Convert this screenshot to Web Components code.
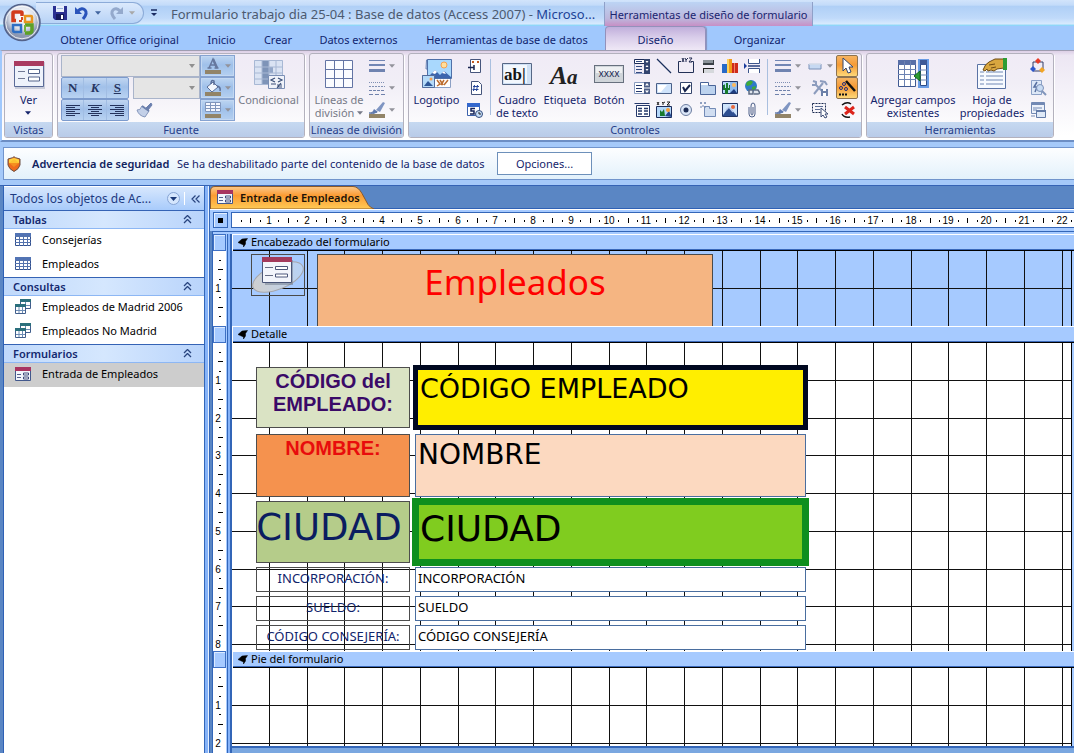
<!DOCTYPE html>
<html lang="es">
<head>
<meta charset="utf-8">
<title>Formulario trabajo dia 25-04 : Base de datos (Access 2007)</title>
<style>
html, body { margin: 0; height: 100%; }
body { font: 11px/13px "Noto Sans", "Open Sans", sans-serif; color: #15246b; background: #5a86c4; overflow: hidden; }
</style>
</head>
<body>
<access-app></access-app>
<script>
const arrow = '<svg class="arr" width="7" height="4" viewBox="0 0 7 4"><path d="M0 0h7L3.500 4z" fill="currentColor"/></svg>';

/* Icon drawings: name -> [width, height, markup] */
const lines3 = '<path d="M0 2.500h16" stroke="#7286b4" stroke-width="1"/><path d="M0 7h16" stroke="#7286b4" stroke-width="2"/><path d="M0 12.500h16" stroke="#6f83b0" stroke-width="3"/>';
const dashes = '<path d="M0 2.500h16" stroke="#8090b4" stroke-dasharray="1 1"/><path d="M0 6.500h16" stroke="#8090b4" stroke-dasharray="2 1"/><path d="M0 10.500h16" stroke="#7082ac" stroke-dasharray="3 1"/><path d="M0 14.500h16" stroke="#7082ac" stroke-dasharray="4 2"/>';
const brushLine = '<path d="M4 10Q1 11 0 11 4 13 8 10z" fill="#9fb3d8" stroke="#6c80ac"/><path d="M7 8l7-8 2 1-5 9z" fill="#7f95c2"/><path d="M5 7l4 3-3 1H3z" fill="#5f7ab0"/><path d="M0 12h16v4H0z" fill="#928468"/>';
const win = '<path d="M.5.5h15v13H.5z" fill="#f2f5fc" stroke="#42588c"/><path d="M0 0h16v4H0z" fill="#a83460"/><path d="M2 7.500h4M2 10.500h4" stroke="#555f8c"/><path d="M8.500 6h5v2h-5zM8.500 10h5v2h-5z" fill="#fff" stroke="#3e4a7c"/>';
const bigwin = '<path d="M2 4h30v27H2z" fill="#8d98b0" opacity=".4"/><path d="M1.500 3.500h29v25h-29z" fill="#eef2fb" stroke="#5a6a98"/><path d="M1 3h30v5H1z" fill="#a93a60"/><path d="M5 13.500h7M5 20.500h7" stroke="#707894"/><path d="M15.500 11.500h11v4h-11zM15.500 19h11v4h-11z" fill="#fff" stroke="#54648c"/>';
const I = {
 office: [38,38,'<defs><radialGradient id="g" cx=".5" cy=".35"><stop offset="0" stop-color="#fff"/><stop offset=".65" stop-color="#dfe3ec"/><stop offset="1" stop-color="#8d98b2"/></radialGradient></defs><circle cx="18" cy="18.500" r="18" fill="url(#g)" stroke="#53628a" stroke-width="1.500"/><circle cx="18" cy="18.500" r="16.300" fill="none" stroke="#fff" opacity=".8"/><path d="M9 9q0-1 1-1h7q1 0 1 1v3M9 9v7.500h3" fill="none" stroke="#d23b1c" stroke-width="3.500"/><path d="M18 13v4h-4" fill="none" stroke="#d84a20" stroke-width="2" stroke-dasharray="3 1"/><path d="M21 12h6q1 0 1 1v5h-7z" fill="none" stroke="#e8941e" stroke-width="2.500"/><path d="M9 21h8v7h-6q-2 0-2-2z" fill="none" stroke="#2f6fc4" stroke-width="2.500"/><path d="M21 21h7v5q0 3-3 3h-4" fill="none" stroke="#5da026" stroke-width="3.500"/><path d="M21 21v7" stroke="#74b43c" stroke-width="2"/>'],
 save: [14,14,'<path d="M0 0h14v14H2l-2-2z" fill="#2a2f91"/><path d="M3 0h8v6H3z" fill="#e8eefb"/><path d="M4 2h6v1H4z" fill="#9bb2d8"/><path d="M3 8h8v6H3z" fill="#15195c"/><path d="M8 9h2v4H8z" fill="#fff"/>'],
 undo: [14,14,'<path d="M3 5q4-4 7-1t-2 9" fill="none" stroke="#2a54bb" stroke-width="3"/><path d="M0 1v7h7z" fill="#2a54bb"/>'],
 redo: [14,14,'<path d="M11 5Q7 1 4 4t2 9" fill="none" stroke="#94a9cc" stroke-width="3"/><path d="M14 1v7H7z" fill="#94a9cc"/>'],
 more: [8,8,'<path d="M1 1h6" stroke="#1a2b62" stroke-width="1.500"/><path d="M1 4h6L4 7z" fill="#1a2b62"/>'],
 ver: [32,32,bigwin],
 cond: [32,32,'<path d="M1 2h29v25H1z" fill="#dae3f3"/><path d="M9 2h7v25H9z" fill="#7e94b8"/><path d="M16 9h4v6h-4z" fill="#93a7c8"/><path d="M1.500 2.500h28v24h-28zM9 2v25M16 2v25M23 2v25M1 9h29M1 15h29M1 21h29" fill="none" stroke="#a8b8d4"/><path d="M15.500 17.500h16v13h-16z" fill="#f0f3fa" stroke="#7b8fb5"/><path d="M22 20l-4 2 4 2m-4 2h5M25 20l4 2-4 2M24 27h5M24 29h5M28 25l-4 5" fill="none" stroke="#3a4f78" stroke-width="1.200"/>'],
 gridbig: [32,32,'<path d="M2.500 2.500h27v27h-27z" fill="#fbfcff"/><path d="M2.500 2.500h27v27h-27zM11.500 2v28M20.500 2v28M2 11.500h28M2 20.500h28" fill="none" stroke="#6374a4"/>'],
 lines: [16,16,lines3], dashes: [16,16,dashes], brushline: [16,16,brushLine],
 fontcolor: [16,16,'<path d="M4 10L8 1l4 9M5.500 7h5M2.500 10h4M9.500 10h4" fill="none" stroke="#66789e" stroke-width="1.500"/><path d="M8 1l4 9" stroke="#66789e" stroke-width="2.500"/><path d="M0 12h16v4H0z" fill="#928468"/>'],
 fill: [16,16,'<path d="M2 7l6-5 5 5-6 5z" fill="#f4f7fd" stroke="#5a6e98"/><path d="M6 4q0-5 3-3v4M12 6q4 1 3 5" fill="none" stroke="#5a6e98" stroke-width="1.500"/><path d="M0 12h16v4H0z" fill="#928468"/>'],
 gridsm: [16,16,'<path d="M.5.5h15v9H.5zM5.500 0v10M10.500 0v10M0 3.500h16M0 6.500h16" fill="#f5f8ff" stroke="#8096bc"/><path d="M0 12h16v4H0z" fill="#928468"/>'],
 al: [16,14,'<path d="M1 2.500h14M1 4.500h9M1 6.500h14M1 8.500h9M1 10.500h14M1 12.500h9" stroke="#24335c"/>'],
 ac: [16,14,'<path d="M1 2.500h14M4 4.500h8M1 6.500h14M4 8.500h8M1 10.500h14M4 12.500h8" stroke="#24335c"/>'],
 ar: [16,14,'<path d="M1 2.500h14M6 4.500h9M1 6.500h14M6 8.500h9M1 10.500h14M6 12.500h9" stroke="#24335c"/>'],
 brush: [16,16,'<path d="M10 6l5-5 1 2-4 5z" fill="#6a7fae" stroke="#6a7fae"/><path d="M6 4l7 5-4 6q-6-1-8-7 3 1 5-4z" fill="#c3d0e8" stroke="#8496bb"/><path d="M6 4l7 5" stroke="#6c80ac" stroke-width="2"/>'],
 logo: [32,32,'<path d="M5.500 2h20l1 9H5z" fill="#bdd6f5" stroke="#6c86b4"/><path d="M1.500 17.500h28v12h-28z" fill="#fff" stroke="#8ca0c4"/><path d="M6.500 1.500h24v19h-24z" fill="#a9d8fd" stroke="#4f70a8"/><circle cx="23" cy="7" r="3" fill="#ffdf9c" stroke="#f5a14e"/><path d="M7 19l7-7 5 5 4-4 7 6v1H7z" fill="#3c66ae"/><path d="M14 12l-3 3 3 1 2-2zM23 13l-2 2 4 1z" fill="#fff"/><path d="M1.500 17.500h12v12h-12z" fill="#b5daf8" stroke="#536c9c"/><path d="M3 28l4-5 5 5z" fill="#2e5697"/><circle cx="10" cy="21" r="1.500" fill="#f5a14e"/><path d="M16 22l3 4-3 2M19 22l3 5M23 22l-3 5M27 22l-4 5" fill="none" stroke="#be6e2f" stroke-width="1.500"/>'],
 page1: [16,16,'<path d="M3.500 1.500h10v13h-10z" fill="#fff" stroke="#46557c"/><path d="M5 3l2 2m0-2L5 5m5-2l2 2m0-2l-2 2" stroke="#c45b22"/><path d="M1 9.500h6M7 7v5" stroke="#1a2550" stroke-width="1.500"/>'],
 page2: [16,16,'<path d="M4.500 1.500h7l3 3v10h-10z" fill="#fff" stroke="#46557c"/><path d="M7.500 5l-1 6M10.500 5l-1 6M6 6.500h6M5.500 9.500h6" stroke="#26469c"/>'],
 date: [16,16,'<path d="M.5 1.500h12v12H.5z" fill="#fff" stroke="#3c62ac"/><path d="M0 1h13v4H0z" fill="#3468cd"/><path d="M8 6.500H4V9h3v3H3" fill="none" stroke="#15235a" stroke-width="1.500"/><circle cx="12" cy="12" r="3.500" fill="#c7def8" stroke="#344c7c"/><path d="M12 10v2h2" stroke="#222" fill="none"/>'],
 textbox: [32,32,'<path d="M1.500 5.500h29v21h-29z" fill="#cfe0f4" stroke="#566785"/><path d="M3 7h23v18H3z" fill="#f2f7fd"/><text x="3" y="22" font-family="Liberation Serif" font-weight="700" font-size="17" fill="#151515">ab|</text>'],
 etiqueta: [32,32,'<text x="1" y="26" font-family="Liberation Serif" font-style="italic" font-weight="700" font-size="26" fill="#222">A</text><text x="18" y="26" font-family="Liberation Serif" font-style="italic" font-weight="700" font-size="21" fill="#222">a</text>'],
 boton: [32,32,'<rect x="1.500" y="7.500" width="29" height="17" fill="#d0d5da" stroke="#67707e"/><path d="M3 9h26v6H3z" fill="#eef0f2"/><text x="16" y="19" text-anchor="middle" font-family="Noto Sans" font-size="10" fill="#1d2b55">xxxx</text>'],
 combo: [16,16,'<path d="M.5 1.500h15v4H.5z" fill="#fff" stroke="#1c2c58"/><path d="M10 1h6v15h-6z" fill="#33456f"/><path d="M11.500 3h3L13 5zM11.500 11h3L13 13zM11.500 9h3L13 7z" fill="#fff"/><path d="M2 3.500h6M2 8.500h6M2 11.500h6M2 14.500h6" stroke="#334a80"/><path d="M.5 6v9.500H10" fill="none" stroke="#8fa0c4"/>'],
 list: [16,16,'<path d="M.5 2.500h15v11H.5z" fill="#fff" stroke="#8a9cc0"/><path d="M10 2h6v12h-6z" fill="#4b5d86"/><path d="M11 10.500h4L13 13zM11 5.500h4L13 3z" fill="#fff"/><path d="M10 8h6" stroke="#fff"/><path d="M2 5.500h6M2 8.500h6M2 11.500h6" stroke="#24386c"/>'],
 sub: [16,16,'<path d="M.5 1.500h15M2.500 3.500h13v11h-13z" fill="#fff" stroke="#25386a"/><path d="M4 6.500h4M4 9h4M4 12h4M10 6.500h4M10 9h4M10 12h4" stroke="#25386a" stroke-width="1.500"/>'],
 line: [16,16,'<path d="M1 1l14 14" stroke="#1a2f5c" stroke-width="1.200"/>'],
 rect: [16,16,'<path d="M.5 3.500h15v10H.5z" fill="#cfe3fb" stroke="#4a6088"/><path d="M2 5h9L5 12H2z" fill="#fff"/>'],
 subimg: [16,16,'<path d="M.5 4.500h15v11H.5z" fill="#b5d8fa" stroke="#1b2c5a"/><path d="M1 0l2 3m0-3L1 3m5-3l1 1 2-1M7 1v2m4-3h3l-3 3h3" stroke="#222" fill="none"/><path d="M4 8l2 2 2-3 1 7H4z" fill="#187a2c"/><path d="M9 14l4-5 3 6z" fill="#25468a"/><circle cx="12" cy="8" r="2" fill="#f49d36"/>'],
 frame: [16,16,'<path d="M3 3.500H.5v11h15v-11H13" fill="none" stroke="#223056"/><path d="M4 0l2 4m0-4L4 4m3-4l1 2 2-2M8 2v2m3-4h3l-3 4h3" stroke="#222b50" fill="none"/>'],
 check: [16,16,'<path d="M2.500 2.500h11v11h-11z" fill="#fff" stroke="#34456c"/><path d="M5 7l2 4 5-6" fill="none" stroke="#17244d" stroke-width="2"/>'],
 radio: [16,16,'<circle cx="8" cy="8" r="5.500" fill="#dbe6f7" stroke="#6c7d9f"/><circle cx="8" cy="8" r="2.500" fill="#1d2c55"/>'],
 toggle: [16,16,'<path d="M3 2h11v5H3z" fill="#3a4046"/><path d="M3 2h10v3H3z" fill="#8b9299"/><path d="M3 10h11v5H3z" fill="#222"/><path d="M4 11h10v4H4z" fill="#d5d8dc"/>'],
 tab: [16,16,'<path d="M.5 14.500v-12h8v3h7v9z" fill="#bcd2ee" stroke="#4a6498"/><path d="M1 3h7v2H1z" fill="#fff"/>'],
 page: [16,16,'<path d="M4.500 14.500v-10h5v2h6v8z" fill="#d1def1" stroke="#738bb6"/><path d="M0 1h2m2 0h2M1 0v2m4-2v2M0 5h2m2 0h2M3 3v2" stroke="#6d82ad"/>'],
 chart: [16,16,'<path d="M0 6h5v9H0z" fill="#2869c7"/><path d="M5 1h5v14H5z" fill="#f19b1b"/><path d="M5 1h2v14H5z" fill="#fed25c"/><path d="M10 5h6v10h-6z" fill="#cf2c1b"/><path d="M12 5h1v10h-1z" fill="#f0826a"/>'],
 bound: [16,16,'<path d="M.5 1.500h15v12H.5z" fill="#b9dbfb" stroke="#223667"/><path d="M8 2h7v11H8z" fill="#8fbaec"/><path d="M3 4v4h1V3h2v5h1V5h1v5H6v4H3v-4H1V5h1z" fill="#17792b"/><circle cx="12" cy="5" r="2" fill="#ffb95b"/><path d="M8 13l4-4 3 4z" fill="#1d3c80"/>'],
 image: [16,16,'<path d="M.5 1.500h15v13H.5z" fill="#cfe4fb" stroke="#223667"/><path d="M1 13l6-8 8 9H1z" fill="#2e4f91"/><circle cx="11" cy="5" r="2" fill="#e8683c"/><path d="M4 8l3-3 4 5" fill="none" stroke="#b9c9ec" stroke-width="1.500"/>'],
 brk: [16,16,'<path d="M4.500 1v4.500h11V1M4.500 15v-4.500h11V15" fill="#fff" stroke="#3c558b"/><path d="M4 8h12" stroke="#27407c" stroke-width="1.500"/><path d="M0 5l3 3-3 3z" fill="#1a3d9c"/>'],
 link: [16,16,'<circle cx="7" cy="6" r="6" fill="#2f7ac8"/><path d="M3 2q4-3 6 0l-2 3-4 1-1-2zM8 7l4-1-1 4H8z" fill="#3eaa38"/><path d="M5 10h4v4H5zM10 10h4q3 4 0 4h-4" fill="#dfe5ee" stroke="#5d6b82" stroke-width="1.500"/>'],
 clip: [16,16,'<path d="M5 5v7q0 3 3 3t3-3V4q0-3-2-3T7 4v7q0 2 1 2t1-2V5" fill="none" stroke="#4c5f88" stroke-width="1"/>'],
 raised: [16,16,'<path d="M2 6h12v5H2z" fill="#c7d9f2" stroke="#7a90b8"/><path d="M2 6h12" stroke="#fff"/>'],
 tools: [16,16,'<path d="M3 4l8 8M11 3L2 14" stroke="#8c9cbd" stroke-width="2"/><path d="M8 1l5 1 2 3M1 1l3 1v3H0" fill="none" stroke="#8c9cbd" stroke-width="2"/><path d="M9 9h7v7H9z" fill="#6d81a9"/><path d="M11 9h3v2h-3zM11 13h3v3h-3z" fill="#fff"/>'],
 select: [16,16,'<path d="M.5 1.500h13v9H.5z" fill="none" stroke="#1b2b50" stroke-dasharray="2 1"/><path d="M3 4.500h8M3 7.500h5" stroke="#5a6c94"/><path d="M9 6v9l2-2 2 3 2-1-2-3h3z" fill="#fff" stroke="#3b4b74"/>'],
 cursor: [16,18,'<path d="M4 1v13l3-3 2 5 3-1-2-5h4z" fill="#fff" stroke="#31456e"/>'],
 wand: [18,18,'<path d="M8 2l9 10" stroke="#111" stroke-width="2.500"/><circle cx="3" cy="9" r="1.500" fill="none" stroke="#232c7a"/><circle cx="6" cy="5" r="1.500" fill="none" stroke="#232c7a"/><circle cx="8" cy="10" r="1.500" fill="none" stroke="#232c7a"/><path d="M1 15.500h8" stroke="#111" stroke-width="2" stroke-dasharray="2 1"/>'],
 nox: [18,16,'<path d="M4 3q5-4 9-1M4 12q2 4 8 3" fill="none" stroke="#111" stroke-width="1.500"/><path d="M7 5l9 7M16 5l-9 7" stroke="#dc241c" stroke-width="3"/>'],
 addf: [32,32,'<path d="M1.500 2.500h17v26h-17z" fill="#fff" stroke="#405a92"/><path d="M1 2h18v5H1z" fill="#586fa8"/><path d="M7.500 3v25M13.500 3v25M1 11.500h18M1 16.500h18M1 21.500h18" stroke="#6d83b2"/><path d="M21 1h11v29H21z" fill="#6a9ce5"/><path d="M23.500 3.500h6v24h-6z" fill="#fff" stroke="#2d4c88"/><path d="M23 2h7v5h-7z" fill="#3f5a97"/><path d="M23 12h7M23 17h7M23 22h7" stroke="#6d83b2"/><path d="M17 18l6-5v10z" fill="#2a9a31" stroke="#126418"/>'],
 props: [32,32,'<path d="M1.500 6.500h28v24h-28z" fill="#f7faff" stroke="#5a73a5"/><path d="M4 14h4m2 0h17M4 18h4m2 0h17M4 22h4m2 0h17M4 26h4m2 0h17" stroke="#7188b5"/><path d="M7 12q2-6 6-8l6-3h9v9l-7 1-3 2-3-1-3 1-1-2-2 2z" fill="#d8a63f" stroke="#6f4b14"/><path d="M13 7l6-1M15 10l5-1" stroke="#6f4b14"/><path d="M27 0h4v12h-4z" fill="#2d9d35"/>'],
 rel: [16,16,'<path d="M3 4h10v9H3z" fill="none" stroke="#333c66"/><path d="M8 0l3 3-3 3-3-3z" fill="#e83a27"/><path d="M3 8l3 3-3 3-3-3z" fill="#2e57cc"/><path d="M12 9l3 3-3 3-3-3z" fill="#f1a425"/>'],
 search: [16,16,'<path d="M1.500.5h10v14h-10z" fill="#dde8f7" stroke="#8ba0c6"/><path d="M7 2L4 7h3l-2 5" fill="none" stroke="#566fa0" stroke-width="1.500"/><circle cx="10" cy="8" r="3.500" fill="#c8dbf3" stroke="#7d92b9"/><path d="M12 11l4 4" stroke="#8195bb" stroke-width="2"/>'],
 subwin: [16,16,'<path d="M1.500.5h13v11h-13z" fill="#edf2fb" stroke="#7289b4"/><path d="M1 1h14v2H1z" fill="#7289b4"/><path d="M3 6h9M3 8h4" stroke="#7289b4"/><path d="M6.500 8.500h9v7h-9z" fill="#dfe9f7" stroke="#627ba8"/><path d="M6 8h10v2H6z" fill="#627ba8"/><path d="M1 14h4" stroke="#7289b4"/>'],
 shield: [14,16,'<path d="M7 .7l1.500 1L13 3v6q-1 4-6 6.500Q2 13 1 9V3l4.500-1.300z" fill="#ef6b1d" stroke="#6b5145"/><path d="M2 3.500L7 2l5 1.500V7H2z" fill="#ffd23d"/><path d="M2 7l5-4 5 4-5 4z" fill="#fcb126" opacity=".5"/>'],
 table: [16,13,'<path d="M.5.500h15v12H.5z" fill="#fff" stroke="#33518e"/><path d="M0 0h16v3H0z" fill="#5274b5"/><path d="M4.500 0v13M8.500 0v13M12.500 0v13M0 3.500h16M0 6.500h16M0 9.500h16" stroke="#5473ae"/>'],
 query: [16,15,'<path d="M5.500.5h10v9h-10z" fill="#fff" stroke="#415e8c"/><path d="M5 0h11v3H5z" fill="#2b6f7c"/><path d="M10.500 3v6M6 6.500h9" stroke="#6e8db5"/><path d="M.5 5.500h10v9H.5z" fill="#fff" stroke="#415e8c"/><path d="M0 5h11v3H0z" fill="#2b6f7c"/><path d="M4 8v6M7.500 8v6M1 11.500h9" stroke="#6e8db5"/>'],
 form: [16,14,win],
 dbl: [9,9,'<path d="M4.500.5L1 4M4.500.5L8 4M4.500 4.500L1 8M4.500 4.500L8 8" fill="none" stroke="#29457f" stroke-width="1.300"/>'],
 dleft: [9,8,'<path d="M4.500.5L1 4l3.500 3.500M8.500.5L5 4l3.500 3.500" fill="none" stroke="#29457f" stroke-width="1.200"/>'],
 round: [13,13,'<circle cx="6.500" cy="6.500" r="6" fill="#d5e6fd" stroke="#86a4d4"/><path d="M3 5h7L6.500 9z" fill="#1c3a78"/>'],
 sect: [10,9,'<path d="M0 4.500L4 1l5.500-.5L7.500 3.500V6L5.500 9V7z" fill="#000" stroke="#000" stroke-width=".5"/>'],
 formlogo: [54,42,'<defs><linearGradient id="e" x2="1"><stop offset="0" stop-color="#cfcfcf"/><stop offset="1" stop-color="#b7d2f5"/></linearGradient></defs><ellipse cx="26" cy="22" rx="27" ry="12" transform="rotate(-23 26 22)" fill="url(#e)" stroke="#a7a7ab"/><path d="M13 5h28v25H13z" fill="#6c7686" opacity=".5"/><path d="M10.500 3.500h29v24h-29z" fill="#f3f5fb" stroke="#4a5678"/><path d="M10 2h30v5H10z" fill="#a33a5c"/><path d="M13 12.500h8M13 20.500h8" stroke="#676d84"/><path d="M23.500 11.500h12v3h-12zM23.500 19h12v3h-12z" fill="#fff" stroke="#4d577a"/>']
};

function define(name, html, init) {
  customElements.define(name, class extends HTMLElement {
    connectedCallback() {
      if (this.shadowRoot) return;
      const root = this.attachShadow({ mode: 'open' });
      root.innerHTML = typeof html === 'function' ? html(this) : html;
      if (init) init(root, this);
    }
  });
}
const at = (el, n) => el.getAttribute(n) || '';
const reset = 'button{font:inherit;color:inherit;background:none;border:0;padding:0;margin:0;white-space:nowrap}a{color:inherit;text-decoration:none}*{box-sizing:border-box}';

define('ui-icon', el => {
  const [w, h, body] = I[at(el, 'name')];
  return `<style>:host{display:block;flex:none}svg{display:block;overflow:visible}</style><svg width="${w}" height="${h}" viewBox="0 0 ${w} ${h}" aria-hidden="true">${body}</svg>`;
});

/* ---------- title bar ---------- */
define('title-bar', `<style>${reset}
:host{display:flex;position:relative;height:26px;background:linear-gradient(#d2e4fb 0,#c3dbf9 20%,#afcff6 24%,#c0dafa 70%,#d8eafd 92%,#8fd6f8 97%)}
.qat{display:flex;align-items:center;margin:2px 0 2px 36px;width:108px;height:22px;padding-left:17px;border:1px solid #8cabd8;border-left:0;border-radius:0 11px 11px 0;background:linear-gradient(#dbe9fc,#b8d3f6);color:#41659f}
.qat button:nth-child(n+2){margin-left:8px}.qat button:nth-child(2n+3){margin-left:6px}
.arr{display:block;width:6px}
.more{width:20px}.more ui-icon{margin:auto;width:8px}
h1{margin:0;padding-left:7px;width:440px;font:13px/29px "Noto Sans",sans-serif;color:#4c5a70;white-space:nowrap;flex:none}
h1 b{font-weight:400;color:#214397}
.ctx{width:209px;margin-top:2px;text-align:center;line-height:26px;white-space:nowrap;flex:none;border:solid #8fa0c8;border-width:0 1px;background:linear-gradient(#bcd4f4,#bdb6dc 70%,#c78fc5);color:#1a2570}
.orb{position:absolute;left:4px;top:4px}
</style>
<div class="qat"><button aria-label="Guardar"><ui-icon name="save"></ui-icon></button><button aria-label="Deshacer"><ui-icon name="undo"></ui-icon></button><button aria-label="Opciones de deshacer">${arrow}</button><button aria-label="Rehacer" style="color:#9aa3b5"><ui-icon name="redo"></ui-icon></button><button aria-label="Opciones de rehacer" style="color:#a8a8a8">${arrow}</button></div>
<button class="more" aria-label="Personalizar"><ui-icon name="more"></ui-icon></button>
<h1>Formulario trabajo dia 25-04 : Base de datos (Access 2007) - <b>Microso...</b></h1>
<div class="ctx">Herramientas de diseño de formulario</div>
<button class="orb" aria-label="Botón de Office"><ui-icon name="office"></ui-icon></button>`);

/* ---------- ribbon ---------- */
define('ribbon-tabs', `<style>${reset}
:host{display:flex;height:24px;padding-left:46px;background:#a0c8fd;color:#10246e}
button{height:24px;padding-top:2px;flex:none}
.on{margin-left:2px;border:1px solid #9391bb;border-bottom:0;border-radius:4px 4px 0 0;background:linear-gradient(#c0aedb,#d9cdea 45%,#efe8f6);box-shadow:1px 0 1px #8592bc}
</style>
<button style="width:147px">Obtener Office original</button><button style="width:57px">Inicio</button><button style="width:56px">Crear</button><button style="width:105px">Datos externos</button><button style="width:192px">Herramientas de base de datos</button><button class="on" style="width:101px">Diseño</button><button style="width:107px">Organizar</button>`);

define('ribbon-group', el => `<style>
:host{display:flex;flex-direction:column;box-sizing:border-box;width:${at(el,'w')}px;height:85px;flex:none;border:1px solid #b3b1bd;border-radius:3px;background:linear-gradient(#f0ebf6,#f1eef6 35%,#fff);box-shadow:1px 1px 0 #fff}
.body{display:flex;height:68px;flex:none;padding-top:1px;box-sizing:border-box}
.cap{flex:1;line-height:15px;text-align:center;white-space:nowrap;background:linear-gradient(#c6d9f1,#b9cbe8);color:#27408b;border-radius:0 0 2px 2px}
</style><div class="body"><slot></slot></div><div class="cap">${at(el,'label')}</div>`);

define('big-button', el => `<style>${reset}
:host{display:block;flex:none;width:${at(el,'w')}px;color:${el.hasAttribute('off')?'#777a88':'#15246b'}}
button{width:100%;display:flex;flex-direction:column;align-items:center;padding-top:3px}
.t{display:block;margin:3px -8px 0;text-align:center}.arr{width:6px;vertical-align:2px}
</style><button><ui-icon name="${at(el,'icon')}"></ui-icon><span class="t">${at(el,'label').replace('|','<br>')}${el.hasAttribute('drop')?(at(el,'drop')||' ')+arrow:''}</span></button>`);

define('icon-button', el => `<style>${reset}
:host{display:block;flex:none;width:${at(el,'w')||22}px;height:22px;color:#93939b}
button{width:100%;height:22px;display:flex;align-items:center;justify-content:center;gap:4px}
.arr{width:6px}
.blue{border:1px solid #86a3d1;background:linear-gradient(#bdd5f1,#9fc0ea 45%,#b5d0f0);box-shadow:inset 0 0 0 1px #c3d8f2}
.hot{border:1px solid #8d7350;border-radius:2px;background:linear-gradient(#f6b462,#f59a35 45%,#fed879)}
</style><button class="${at(el,'kind')}" aria-label="${at(el,'label')}"><ui-icon name="${at(el,'icon')}"></ui-icon>${el.hasAttribute('drop')?arrow:''}</button>`);

define('font-panel', `<style>${reset}
:host{display:grid;grid-template-columns:139px 35px;grid-auto-rows:22px;margin-left:3px;flex:none}
.row{display:flex}
select{appearance:none;height:22px;border:1px solid #a9b4ca;border-radius:0;background:#e5e5e5 url('data:image/svg+xml,<svg xmlns="http://www.w3.org/2000/svg" width="6" height="4"><path d="M0 0h6L3 4z" fill="%23909090"/></svg>') no-repeat right 4px center;font:inherit;opacity:1}
.wide{width:139px}.short{width:67px;margin-left:4px}
.set{display:flex;width:68px;border:1px solid #7c9bcd;border-radius:2px;background:linear-gradient(#c0d6f1,#a1c0e9 45%,#b9d3f2)}
.set button{flex:1;font:700 13px/18px "Liberation Serif",serif;color:#26355f;display:flex;justify-content:center;align-items:center}
.set button+button{border-left:1px solid #a1bde3}
icon-button.b{margin-left:4px}
</style>
<div class="row"><select class="wide" aria-label="Fuente" disabled></select></div><icon-button icon="fontcolor" kind="blue" drop w="35" label="Color de fuente"></icon-button>
<div class="row"><div class="set"><button>N</button><button><i>K</i></button><button><u>S</u></button></div><select class="short" aria-label="Tamaño de fuente" disabled></select></div><icon-button icon="fill" kind="blue" drop w="35" label="Color de relleno"></icon-button>
<div class="row"><div class="set"><button aria-label="Izquierda"><ui-icon name="al"></ui-icon></button><button aria-label="Centrar"><ui-icon name="ac"></ui-icon></button><button aria-label="Derecha"><ui-icon name="ar"></ui-icon></button></div><icon-button class="b" icon="brush" label="Copiar formato"></icon-button></div><icon-button icon="gridsm" kind="blue" drop w="35" label="Cuadrícula"></icon-button>`);

define('icon-stack', el => {
  const cols = at(el,'cols') || 1, w = at(el,'w') || 22;
  return `<style>:host{display:grid;grid-template-columns:repeat(${cols},${w}px);grid-auto-rows:22px;flex:none}</style>` +
    at(el,'icons').split(' ').map(s => { const [n,f] = s.split(':'); return `<icon-button icon="${n}" label="${n}" w="${w}" ${f==='d'?'drop':''} kind="${f==='h'?'hot':''}"></icon-button>`; }).join('');
});
define('ribbon-rule', `<style>:host{display:block;width:1px;height:56px;margin:4px 4px 0;background:#a9bfdf;flex:none}</style>`);

define('ribbon-bar', `<style>
:host{display:flex;gap:4px;height:92px;box-sizing:border-box;padding:2px 0 0 2px;border-top:1px solid #9f9db1;border-bottom:2px solid #6d8ec4;background:linear-gradient(#dccfe6 0,#ece6f3 5%,#f3f0f8 40%,#fff 95%);border-left:2px solid #a0c8fd}
</style>
<ribbon-group label="Vistas" w="49"><big-button icon="ver" label="Ver" drop="<br>" w="47"></big-button></ribbon-group>
<ribbon-group label="Fuente" w="248"><font-panel></font-panel><big-button icon="cond" label="Condicional" off w="67"></big-button></ribbon-group>
<ribbon-group label="Líneas de división" w="95"><big-button icon="gridbig" label="Líneas de|división" drop off w="58"></big-button><icon-stack icons="lines:d dashes:d brushline:d" w="28"></icon-stack></ribbon-group>
<ribbon-group label="Controles" w="454"><big-button icon="logo" label="Logotipo" w="55"></big-button><icon-stack icons="page1 page2 date"></icon-stack><ribbon-rule></ribbon-rule><big-button icon="textbox" label="Cuadro|de texto" w="44"></big-button><big-button icon="etiqueta" label="Etiqueta" w="52"></big-button><big-button icon="boton" label="Botón" w="36"></big-button><icon-stack cols="6" icons="combo line frame toggle chart brk list rect check tab bound link sub subimg radio page image clip" style="margin-left:4px"></icon-stack><ribbon-rule></ribbon-rule><icon-stack icons="lines:d dashes:d brushline:d" w="32"></icon-stack><icon-stack icons="raised:d tools select" w="32"></icon-stack><icon-stack icons="cursor:h wand:h nox"></icon-stack></ribbon-group>
<ribbon-group label="Herramientas" w="188"><big-button icon="addf" label="Agregar campos|existentes" w="92"></big-button><big-button icon="props" label="Hoja de|propiedades" w="66"></big-button><icon-stack icons="rel search subwin" style="margin-left:2px"></icon-stack></ribbon-group>`);

define('security-bar', `<style>${reset}
:host{display:block;padding:5px 0 5px 3px;background:#a5c9f9}
.in{display:flex;align-items:center;height:33px;padding-left:3px;border:1px solid #7194cc;border-right:0;background:linear-gradient(#fdfeff,#e3f1fb)}
b{margin-left:11px;width:145px;white-space:nowrap;color:#10235f;font-weight:600}
button{margin-left:10px;width:95px;height:23px;border:1px solid #6d90ba;background:#fff}
span{width:310px;white-space:nowrap}
</style><div class="in"><ui-icon name="shield"></ui-icon><b>Advertencia de seguridad</b><span>Se ha deshabilitado parte del contenido de la base de datos</span><button>Opciones...</button></div>`);

/* ---------- navigation pane ---------- */
define('nav-item', el => `<style>${reset}
:host{display:block}
a{display:flex;align-items:center;height:24px;padding:0 0 3px 11px;color:#000;white-space:nowrap;${el.hasAttribute('on')?'background:#cdcdcd':''}}
span{margin-left:11px}
</style><a href="#"><ui-icon name="${at(el,'icon')}"></ui-icon><span><slot></slot></span></a>`);
define('nav-group', el => `<style>${reset}
:host{display:block;border-top:1px solid #3563b5}
button{display:flex;width:100%;height:18px;align-items:center;justify-content:space-between;padding:0 12px 0 9px;font-weight:600;color:#14296f;border-bottom:1px solid #8db7f4;background:linear-gradient(90deg,#c0d9fb,#d5e7fe 50%,#b9d4fb)}
</style><button>${at(el,'label')}<ui-icon name="dbl"></ui-icon></button><slot></slot>`);
define('nav-pane', `<style>${reset}
:host{display:block;width:201px;box-sizing:border-box;flex:none;background:#fff;border-left:1px solid #2f61b5}
.top{display:flex;align-items:center;height:24px;padding-left:6px;border-top:1px solid #fff;background:linear-gradient(#d7e7fd,#a8cbfb);color:#1d3a81;font-size:12px}
.top>span{width:157px;white-space:nowrap}
.round{border-right:1px solid #fff;padding-right:4px}
.shut{margin-left:6px}
</style><div class="top"><span>Todos los objetos de Ac...</span><button class="round" aria-label="Menú"><ui-icon name="round"></ui-icon></button><button class="shut" aria-label="Contraer"><ui-icon name="dleft"></ui-icon></button></div>
<nav-group label="Tablas"><nav-item icon="table">Consejerías</nav-item><nav-item icon="table">Empleados</nav-item></nav-group>
<nav-group label="Consultas"><nav-item icon="query">Empleados de Madrid 2006</nav-item><nav-item icon="query">Empleados No Madrid</nav-item></nav-group>
<nav-group label="Formularios"><nav-item icon="form" on>Entrada de Empleados</nav-item></nav-group>`);

/* ---------- form designer ---------- */
const CM = 37.75;
const pos = n => Math.floor(n * CM - 0.3);
define('h-ruler', '', root => {
  let s = '';
  for (let q = 1; q < 90; q++) {
    const x = pos(q / 4);
    if (q % 4 === 0) s += `<text x="${x}" y="11" text-anchor="middle">${q / 4}</text>`;
    else s += q % 2 ? `<path d="M${x} 7h1v2h-1z"/>` : `<path d="M${x} 5h1v5h-1z"/>`;
  }
  root.innerHTML = `<style>:host{display:block;height:14px;overflow:hidden;background:#fff}svg{display:block;width:100%;height:14px;font:10px "Liberation Sans",sans-serif}</style><svg>${s}</svg>`;
});
define('v-ruler', '', (root, el) => {
  const h = +at(el, 'h');
  let s = '';
  for (let q = 1; pos(q / 4) < h - 2; q++) {
    const y = pos(q / 4);
    if (q % 4 === 0) s += `<text x="5" y="${y + 4}" text-anchor="middle">${q / 4}</text>`;
    else s += q % 2 ? `<path d="M6 ${y}h2v1h-2z"/>` : `<path d="M5 ${y}h5v1H5z"/>`;
  }
  root.innerHTML = `<style>:host{display:block;overflow:hidden;background:#fff}svg{display:block;width:13px;height:${h}px;font:10px "Liberation Sans",sans-serif}</style><svg>${s}</svg>`;
});
define('form-section', el => {
  const h = +at(el, 'h'), last = el.hasAttribute('last');
  let s = '';
  for (let n = 1; n < 23; n++) s += `M${pos(n)} 0h1v${h}h-1z`;
  for (let n = 1; pos(n) < h; n++) s += `M0 ${pos(n)}h839v1H0z`;
  return `<style>${reset}
:host{display:grid;grid-template-columns:13px 6px minmax(0,1fr);grid-template-rows:17px ${h}px ${last ? '1fr' : ''};flex:${last ? '1' : 'none'}}
.mark{border:1px solid #3e70c4;background:#a6caff;box-shadow:inset 1px 1px #dcebff}
.edge{grid-row:1/span ${last ? 3 : 2};grid-column:2;border:solid #3366b8;border-width:0 2px 0 1px;background:#86b3f8;margin-left:1px}
h2{margin:0;grid-column:3;display:flex;align-items:center;padding:0 0 2px 5px;font:inherit;line-height:14px;gap:3px;color:#000;border:solid #fff;border-width:1px 0 0 1px;background:#a6caff;box-shadow:inset 0 -1px #000,inset 0 -2px #3a69bb}
v-ruler{grid-column:1;grid-row:2/span ${last ? 2 : 1}}
.body{position:relative;grid-column:3;grid-row:2;overflow:hidden;max-width:840px;border-right:1px solid #000;background:${at(el,'bg')}}
.grid{display:block;width:100%;height:${h}px}
.below{grid-column:3;grid-row:3;border-top:2px solid #3366b8;background:#7aa7e0}
</style><div class="mark"></div><div class="edge"></div><h2><ui-icon name="sect"></ui-icon>${at(el,'label')}</h2><v-ruler h="${last ? h + 5 : h}"></v-ruler><div class="body"><svg class="grid"><path d="${s}" fill="#111"/></svg><slot></slot></div>${last ? '<div class="below"></div>' : ''}`;
});
/* A bound field on the design canvas: its label and its text box. */
define('field-pair', el => `<style>${reset}
:host{position:absolute;left:24px;top:${at(el,'y')}px;height:${at(el,'h')}px;display:grid;grid-template-columns:154px 391px;gap:5px;
 color:#10246b;font:13px/17px "Noto Sans",sans-serif}
label{display:flex;justify-content:center;text-align:center;border:1px solid #4d4d4d;padding:2px 2px 0;overflow:hidden;white-space:pre;background:var(--lb,none)}
label span{flex:none}
input{width:391px;height:100%;margin:0;border:1px solid #4a6e9f;border-radius:0;background:#fff;padding:0 2px 3px;font:inherit;color:#000}
:host(.code) label{font:700 20px/23px "Liberation Sans",sans-serif;color:#3a0a67;--lb:#dae3c4}
:host(.code) input{font:27px/34px "DejaVu Sans",sans-serif;background:#ffee00;outline:5px solid #000820;outline-offset:-3px;padding:0 4px 18px}
:host(.name) label{font:700 20px/23px "Liberation Sans",sans-serif;color:#e80c0c;--lb:#f5924e}
:host(.name) input{font:28px/34px "DejaVu Sans",sans-serif;background:#fcd9c0;padding:0 2px 22px}
:host(.city) label{font:37px/44px "DejaVu Sans",sans-serif;color:#0b1d60;--lb:#b5cc8a;padding-top:4px}
:host(.city) label span{padding-right:8px}
:host(.city) input{font:36px/44px "DejaVu Sans",sans-serif;background:#80cc1f;outline:7px solid #0e8f1e;outline-offset:-4px;padding:0 4px 8px}
</style><label for="f"><span>${at(el,'label').replace('|','\n')}</span></label><input id="f" value="${at(el,'value')}">`);

define('form-designer', `<style>${reset}
:host{display:flex;flex-direction:column;flex:1;min-width:0;background:#5a86c4}
.tabs{height:23px;display:flex;flex:none;border-bottom:1px solid #2f61b5}
.tabs button{position:relative;display:flex;align-items:center;width:164px;height:22px;font-weight:600;color:#1b1208;padding-left:7px;gap:7px}
.tabs svg{position:absolute;left:0;top:0}.tabs ui-icon,.tabs span{position:relative}
.page{display:grid;grid-template-columns:15px minmax(0,1fr);column-gap:3px;padding:2px 0 3px 3px;border-top:1px solid #fff;background:#a6caff;flex:none}
.corner{display:flex;align-items:center;justify-content:center;height:16px;border:1px solid #3366b8;background:#a6caff;box-shadow:inset 1px 1px #e4efff}
.corner i{width:5px;height:5px;background:#000}
.rul{border:1px solid #3366b8;border-right:0;background:#fff;height:16px}
.work{flex:1;display:flex;flex-direction:column;border-left:1px solid #3366b8;border-top:1px solid #3366b8;margin-left:2px;padding-top:2px;background:#a6caff}
.title{position:absolute;left:85px;top:3px;width:396px;height:80px;border:1px solid #4a4a4a;background:#f5b582;color:#f00;font:35px/54px "Noto Sans",sans-serif;text-align:center}
.logo{position:absolute;left:19px;top:3px;width:54px;height:42px;border:1px solid #4a4a4a}
</style>
<div class="tabs"><button><svg width="164" height="23" viewBox="0 0 164 23"><defs><linearGradient id="o" x2="0" y2="1"><stop offset="0" stop-color="#fbc98c"/><stop offset=".4" stop-color="#fb9c34"/><stop offset="1" stop-color="#ffca55"/></linearGradient></defs><path d="M.5 23V5Q.5.5 5 .5h138q5 0 9 7l6 11q2 3 6 4.500z" fill="url(#o)" stroke="#8a5a2c"/></svg><ui-icon name="form"></ui-icon><span>Entrada de Empleados</span></button></div>
<div class="page"><div class="corner"><i></i></div><div class="rul"><h-ruler></h-ruler></div></div>
<div class="work">
<form-section label="Encabezado del formulario" h="75" bg="#a6caff"><div class="logo"><ui-icon name="formlogo"></ui-icon></div><div class="title">Empleados</div></form-section>
<form-section label="Detalle" h="308" bg="#fff">
<field-pair class="code" y="24" h="61" label="CÓDIGO del|EMPLEADO:" value="CÓDIGO EMPLEADO"></field-pair>
<field-pair class="name" y="91" h="63" label="NOMBRE:" value="NOMBRE"></field-pair>
<field-pair class="city" y="158" h="62" label="CIUDAD" value="CIUDAD"></field-pair>
<field-pair y="224" h="25" label="INCORPORACIÓN:" value="INCORPORACIÓN"></field-pair>
<field-pair y="253" h="25" label="SUELDO:" value="SUELDO"></field-pair>
<field-pair y="282" h="25" label="CÓDIGO CONSEJERÍA:" value="CÓDIGO CONSEJERÍA"></field-pair>
</form-section>
<form-section label="Pie del formulario" h="78" bg="#fff" last></form-section>
</div>`);

define('access-app', `<style>
:host{display:flex;flex-direction:column;height:100vh;overflow:hidden}
main{flex:1;display:flex;min-height:0;padding-left:3px;border-top:1px solid #3563b5;background:#5a86c4}
.split{width:6px;box-sizing:border-box;flex:none;border:solid #3366b8;border-width:0 1px;background:#86b3f8;box-shadow:inset -1px 0 #e4efff}
security-bar,ribbon-bar,ribbon-tabs,title-bar{flex:none}
</style><title-bar></title-bar><ribbon-tabs></ribbon-tabs><ribbon-bar></ribbon-bar><security-bar></security-bar><main><nav-pane></nav-pane><div class="split"></div><form-designer></form-designer></main>`);
</script>
</body>
</html>
